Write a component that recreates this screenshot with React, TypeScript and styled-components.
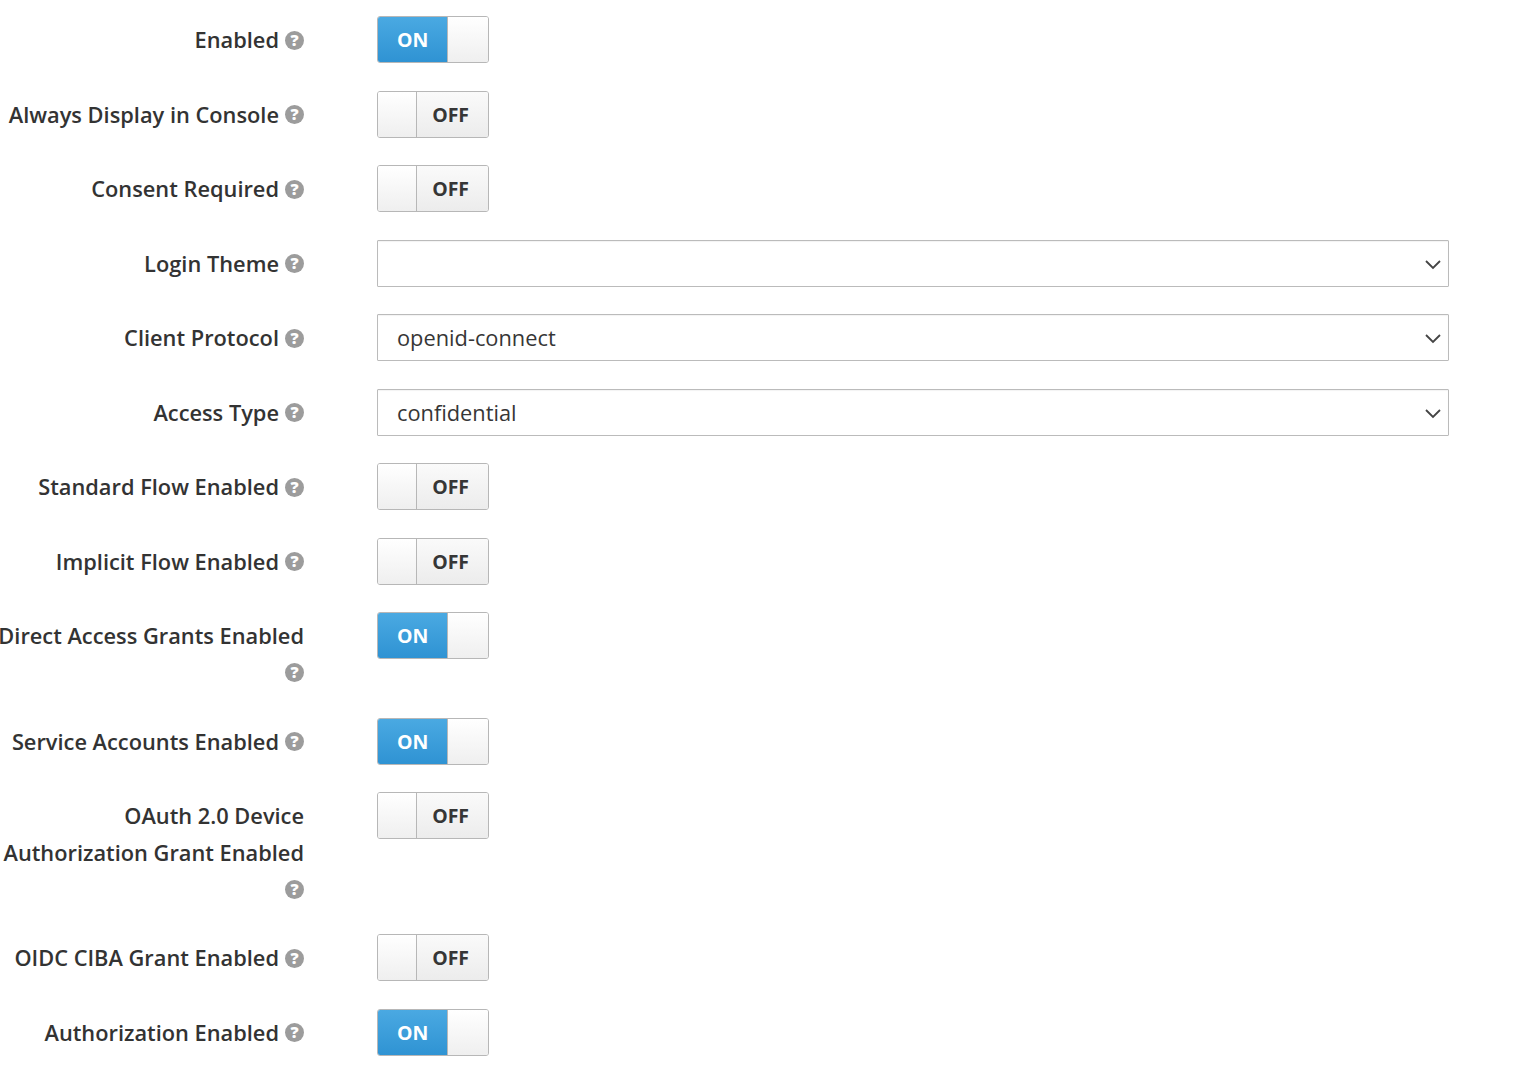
import React from 'react';
import styled, { createGlobalStyle } from 'styled-components';

const GlobalStyle = createGlobalStyle`
  html, body {
    margin: 0;
    padding: 0;
    background: #fff;
  }
  body {
    font-family: 'Open Sans', 'Noto Sans', sans-serif;
    color: #363636;
  }
`;

const Form = styled.div`
  padding-top: 16px;
  width: 1536px;
`;

const Row = styled.div`
  display: flex;
  align-items: flex-start;
  margin-bottom: 27.5px;
`;

const Label = styled.div`
  width: 304px;
  flex: 0 0 304px;
  display: flex;
  flex-direction: column;
  align-items: flex-end;
  font-size: 21.8px;
  font-weight: 600;
  line-height: 36.5px;
  padding-top: 5px;
  color: #333;
  white-space: nowrap;
`;

const Line = styled.div`
  display: flex;
  align-items: center;
  box-sizing: border-box;
  height: 36.5px;
  padding-top: 2px;
`;

const Help = styled.span`
  display: inline-block;
  width: 19px;
  height: 19px;
  margin-left: 6px;
  border-radius: 50%;
  background: #9c9c9c;
  color: #fff;
  font-size: 16px;
  font-weight: 800;
  line-height: 19px;
  text-align: center;
`;

const Control = styled.div`
  margin-left: 73px;
  flex: 0 0 1072px;
`;

const Switch = styled.div`
  display: flex;
  width: 112px;
  height: 47px;
  box-sizing: border-box;
  border: 1px solid #b7b7b7;
  border-radius: 3px;
  overflow: hidden;
`;

const Half = styled.div<{ $on?: boolean }>`
  width: 70px;
  display: flex;
  align-items: center;
  justify-content: center;
  font-size: 19.5px;
  font-weight: 700;
  padding-right: ${(p) => (p.$on ? '0' : '4px')};
  color: ${(p) => (p.$on ? '#fff' : '#363636')};
  background: ${(p) =>
    p.$on
      ? 'linear-gradient(to bottom, #4aa9e2, #2f93d3)'
      : 'linear-gradient(to bottom, #fafafa, #ececec)'};
`;

const Handle = styled.div<{ $left?: boolean }>`
  width: 40px;
  background: linear-gradient(to bottom, #ffffff, #efefef);
  border-${(p) => (p.$left ? 'right' : 'left')}: 1px solid #b7b7b7;
`;

const Select = styled.div`
  position: relative;
  height: 47px;
  box-sizing: border-box;
  border: 1px solid #bbb;
  border-radius: 1px;
  background: #fff;
  padding-left: 19px;
  font-size: 21.8px;
  line-height: 45px;
  color: #363636;
  box-shadow: inset 0 1px 1px rgba(0, 0, 0, 0.05);
`;

const Caret = styled.svg`
  position: absolute;
  right: 6px;
  top: 16px;
`;

type Item = {
  lines: string[];
  helpBelow?: boolean;
} & ({ kind: 'switch'; on: boolean } | { kind: 'select'; value: string });

const items: Item[] = [
  { lines: ['Enabled'], kind: 'switch', on: true },
  { lines: ['Always Display in Console'], kind: 'switch', on: false },
  { lines: ['Consent Required'], kind: 'switch', on: false },
  { lines: ['Login Theme'], kind: 'select', value: '' },
  { lines: ['Client Protocol'], kind: 'select', value: 'openid-connect' },
  { lines: ['Access Type'], kind: 'select', value: 'confidential' },
  { lines: ['Standard Flow Enabled'], kind: 'switch', on: false },
  { lines: ['Implicit Flow Enabled'], kind: 'switch', on: false },
  { lines: ['Direct Access Grants Enabled'], helpBelow: true, kind: 'switch', on: true },
  { lines: ['Service Accounts Enabled'], kind: 'switch', on: true },
  {
    lines: ['OAuth 2.0 Device', 'Authorization Grant Enabled'],
    helpBelow: true,
    kind: 'switch',
    on: false,
  },
  { lines: ['OIDC CIBA Grant Enabled'], kind: 'switch', on: false },
  { lines: ['Authorization Enabled'], kind: 'switch', on: true },
];

function Toggle({ on }: { on: boolean }) {
  return (
    <Switch>
      {on ? (
        <>
          <Half $on>ON</Half>
          <Handle />
        </>
      ) : (
        <>
          <Handle $left />
          <Half>OFF</Half>
        </>
      )}
    </Switch>
  );
}

export default function App() {
  return (
    <>
      <GlobalStyle />
      <Form>
        {items.map((it, i) => (
          <Row key={i}>
            <Label>
              {it.lines.map((l, j) => (
                <Line key={j}>
                  {l}
                  {!it.helpBelow && j === it.lines.length - 1 && <Help>?</Help>}
                </Line>
              ))}
              {it.helpBelow && (
                <Line>
                  <Help>?</Help>
                </Line>
              )}
            </Label>
            <Control>
              {it.kind === 'switch' ? (
                <Toggle on={it.on} />
              ) : (
                <Select>
                  {it.value}
                  <Caret width="18" height="14" viewBox="0 0 18 14">
                    <path d="M2 4 L9 11 L16 4" fill="none" stroke="#444" strokeWidth="1.8" />
                  </Caret>
                </Select>
              )}
            </Control>
          </Row>
        ))}
      </Form>
    </>
  );
}
